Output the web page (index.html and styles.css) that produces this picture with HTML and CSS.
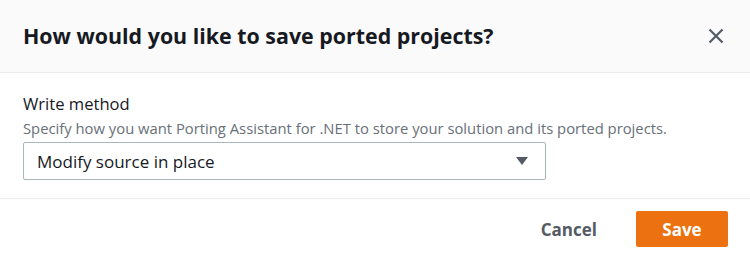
FILE: index.html
```html
<!DOCTYPE html>
<html>
<head>
<meta charset="utf-8">
<link rel="stylesheet" href="styles.css">
</head>
<body>
<div class="modal">
  <div class="header">
    <h2 class="title">How would you like to save ported projects?</h2>
    <button class="close" aria-label="Close">
      <svg width="18" height="16" viewBox="0 0 18 16"><path d="M2.5 1.5 L15.5 14.5 M15.5 1.5 L2.5 14.5" stroke="#545b64" stroke-width="2.2" fill="none"/></svg>
    </button>
  </div>
  <div class="body">
    <div class="label">Write method</div>
    <div class="desc">Specify how you want Porting Assistant for .NET to store your solution and its ported projects.</div>
    <div class="select">
      <span class="value">Modify source in place</span>
      <svg class="caret" width="12" height="8" viewBox="0 0 12 8"><path d="M0 0 H12 L6 8 Z" fill="#545b64"/></svg>
    </div>
  </div>
  <div class="footer">
    <button class="btn-link">Cancel</button>
    <button class="btn-primary">Save</button>
  </div>
</div>
</body>
</html>
```
FILE: styles.css
```css
html, body {
  margin: 0;
  padding: 0;
  background: #ffffff;
}
body {
  font-family: "Open Sans", "Noto Sans", sans-serif;
  color: #16191f;
}
.modal {
  width: 750px;
  height: 259px;
  display: flex;
  flex-direction: column;
}
.header {
  height: 72px;
  background: #fafafa;
  border-bottom: 1px solid #eaeded;
  display: flex;
  align-items: center;
  justify-content: space-between;
  padding: 0 24px 0 23px;
  flex: none;
}
.title {
  margin: 0 0 2px 0;
  font-size: 21.4px;
  font-weight: 700;
  color: #16191f;
}
.close {
  border: 0;
  background: none;
  padding: 0;
  margin-right: 1px;
  margin-bottom: 1px;
  display: flex;
}
.body {
  padding: 20px 24px 18px 23px;
  border-bottom: 1px solid #eaeded;
  flex: none;
}
.label {
  font-size: 16.6px;
  line-height: 22px;
  color: #16191f;
}
.desc {
  margin-top: 3px;
  font-size: 14.8px;
  line-height: 20px;
  color: #687078;
}
.select {
  margin-top: 4px;
  width: 491px;
  height: 36px;
  border: 1px solid #aab7b8;
  border-radius: 2px;
  display: flex;
  align-items: center;
  justify-content: space-between;
  padding: 0 17px 0 13px;
}
.value {
  font-size: 17px;
  color: #16191f;
}
.caret {
  display: block;
}
.footer {
  display: flex;
  justify-content: flex-end;
  align-items: center;
  padding: 12px 22px 0 0;
  gap: 39px;
}
.btn-link {
  border: 0;
  background: none;
  font-family: inherit;
  font-size: 17px;
  font-weight: 700;
  color: #545b64;
  padding: 0;
}
.btn-primary {
  border: 0;
  background: #ec7211;
  color: #ffffff;
  font-family: inherit;
  font-size: 17px;
  font-weight: 700;
  width: 92px;
  height: 36px;
  border-radius: 2px;
  padding: 0;
}
```
